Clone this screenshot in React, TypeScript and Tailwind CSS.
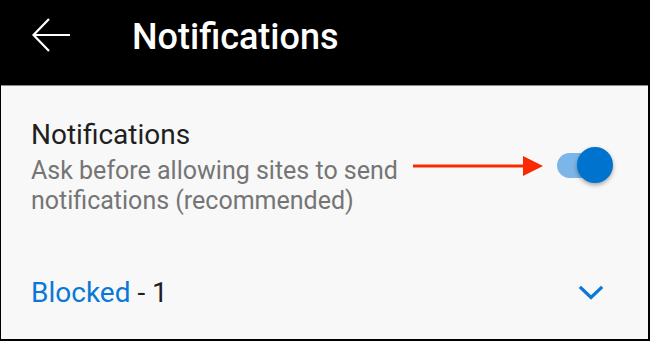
import React from 'react';

const App = () => {
    return (
        <div className="w-[650px] h-[341px] bg-black flex flex-col" style={{ fontFamily: 'Roboto, "Noto Sans", sans-serif' }}>
            <header className="h-[85px] shrink-0 flex items-start">
                <svg width="40" height="40" viewBox="0 0 40 40" className="ml-[30px] mt-[16px]" fill="none" stroke="white" strokeWidth="2.2">
                    <path d="M40 19H5" />
                    <path d="M19 3L3.5 19L19 35" />
                </svg>
                <h1 className="ml-[62px] mt-[19px] text-white text-[36px] font-medium leading-[36px]">Notifications</h1>
            </header>
            <main className="flex-1 bg-[#f8f8f8] border-t border-t-[#8a8a8a] ml-px mr-[2px] mb-[2px] flex flex-col">
                <section className="flex items-start pl-[30px] pr-[35px] pt-[32px]">
                    <div className="flex-1">
                        <h2 className="text-[28px] leading-[34px] text-[#1f1f1f]">Notifications</h2>
                        <p className="text-[25px] leading-[30px] text-[#757575] mt-[4px]">
                            Ask before allowing sites to send<br />notifications (recommended)
                        </p>
                    </div>
                    <div className="flex items-center mt-[29px]">
                        <svg width="130" height="24" viewBox="0 0 130 24" className="mr-[14px] mt-[2px]">
                            <rect x="0" y="10.5" width="112" height="3" fill="#fa2a00" />
                            <polygon points="110,2 130,12 110,22" fill="#fa2a00" />
                        </svg>
                        <div className="relative w-[56px] h-[36px] flex items-center">
                            <div className="w-[48px] h-[25px] rounded-full bg-[#7cb6e8]" />
                            <div className="absolute right-0 top-0 w-[36px] h-[36px] rounded-full bg-[#0073cf] shadow-[0_2px_4px_rgba(0,0,0,0.35)]" />
                        </div>
                    </div>
                </section>
                <section className="flex items-center pl-[30px] pr-[44px] pt-[60px]">
                    <p className="flex-1 text-[28px] leading-[34px] text-[#1f1f1f]">
                        <span className="text-[#0a78d4]">Blocked</span> - 1
                    </p>
                    <svg width="26" height="16" viewBox="0 0 26 16" fill="none" stroke="#0a78d4" strokeWidth="3.2" strokeLinecap="square">
                        <path d="M3 3L13 12.5L23 3" />
                    </svg>
                </section>
            </main>
        </div>
    );
};

export default App;
